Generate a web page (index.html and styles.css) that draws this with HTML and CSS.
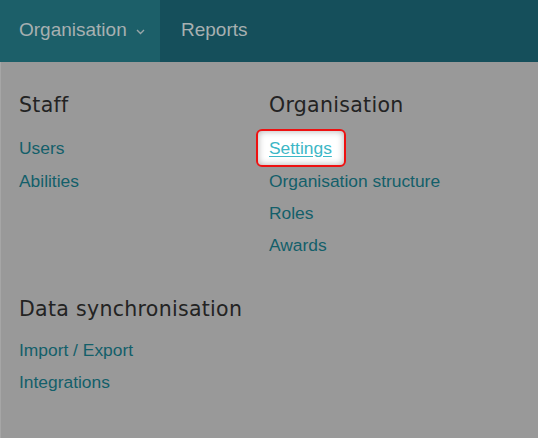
FILE: index.html
```html
<!DOCTYPE html>
<html>
<head>
<meta charset="utf-8">
<link rel="stylesheet" href="styles.css">
</head>
<body>
<nav class="nav">
  <div class="tab tab-active">Organisation
    <svg class="chev" width="9" height="6" viewBox="0 0 9 6"><path d="M1 1 L4.5 4.5 L8 1" fill="none" stroke="currentColor" stroke-width="1.4"/></svg>
  </div>
  <div class="tab tab-plain">Reports</div>
</nav>
<main class="menu">
  <section class="group">
    <h2 class="heading">Staff</h2>
    <ul class="links">
      <li class="first"><a href="#">Users</a></li>
      <li><a href="#">Abilities</a></li>
    </ul>
  </section>
  <section class="group">
    <h2 class="heading">Organisation</h2>
    <ul class="links">
      <li class="first"><a href="#" class="hl">Settings</a></li>
      <li><a href="#">Organisation structure</a></li>
      <li><a href="#">Roles</a></li>
      <li><a href="#">Awards</a></li>
    </ul>
  </section>
  <section class="group group-wide">
    <h2 class="heading">Data synchronisation</h2>
    <ul class="links">
      <li><a href="#">Import / Export</a></li>
      <li><a href="#">Integrations</a></li>
    </ul>
  </section>
</main>
</body>
</html>
```
FILE: styles.css
```css
* { box-sizing: border-box; }
html, body { margin: 0; padding: 0; }
body {
  width: 538px;
  height: 438px;
  background: #999999;
  font-family: "Liberation Sans", Arial, sans-serif;
  overflow: hidden;
}
.nav {
  display: flex;
  height: 62px;
  background: #154f5b;
}
.tab {
  display: flex;
  align-items: center;
  font-size: 19px;
  color: #a7b0b1;
  height: 62px;
  padding-bottom: 2px;
  white-space: nowrap;
}
.tab-active {
  width: 160px;
  flex-shrink: 0;
  padding-left: 19px;
  background: #1c5f69;
}
.tab-plain {
  padding-left: 21px;
}
.chev {
  flex-shrink: 0;
  margin-left: 9px;
  margin-top: 3px;
  color: #9aa6a8;
}
.menu {
  display: grid;
  grid-template-columns: 250px 250px;
  align-content: start;
  padding: 31px 0 0 18px;
  border-left: 1px solid #a6a6a6;
  height: 376px;
}
.group-wide { grid-column: 1 / span 2; margin-top: 36px; }
.heading {
  margin: 0;
  font-family: "DejaVu Sans", sans-serif;
  font-weight: normal;
  font-size: 20.5px;
  line-height: 24px;
  color: #232323;
  letter-spacing: 0.3px;
}
.links {
  list-style: none;
  margin: 14px 0 0 0;
  padding: 0;
}
.links li {
  display: flex;
  align-items: center;
  height: 32px;
  font-size: 17.4px;
}
.links li.first { height: 34px; }
.group-wide .links { margin-top: 13px; }
.links a {
  color: #135f6a;
  text-decoration: none;
}
.links a.hl {
  display: flex;
  align-items: center;
  height: 38px;
  margin: -2px 0 -2px -13px;
  padding: 0 12px 0 11px;
  border: 2px solid #ee1111;
  border-radius: 6px;
  background: #ffffff;
  box-shadow: inset 0 0 7px rgba(0,0,0,0.32);
  color: #3cb7c6;
  text-decoration: underline;
  text-underline-offset: 2px;
}
```
